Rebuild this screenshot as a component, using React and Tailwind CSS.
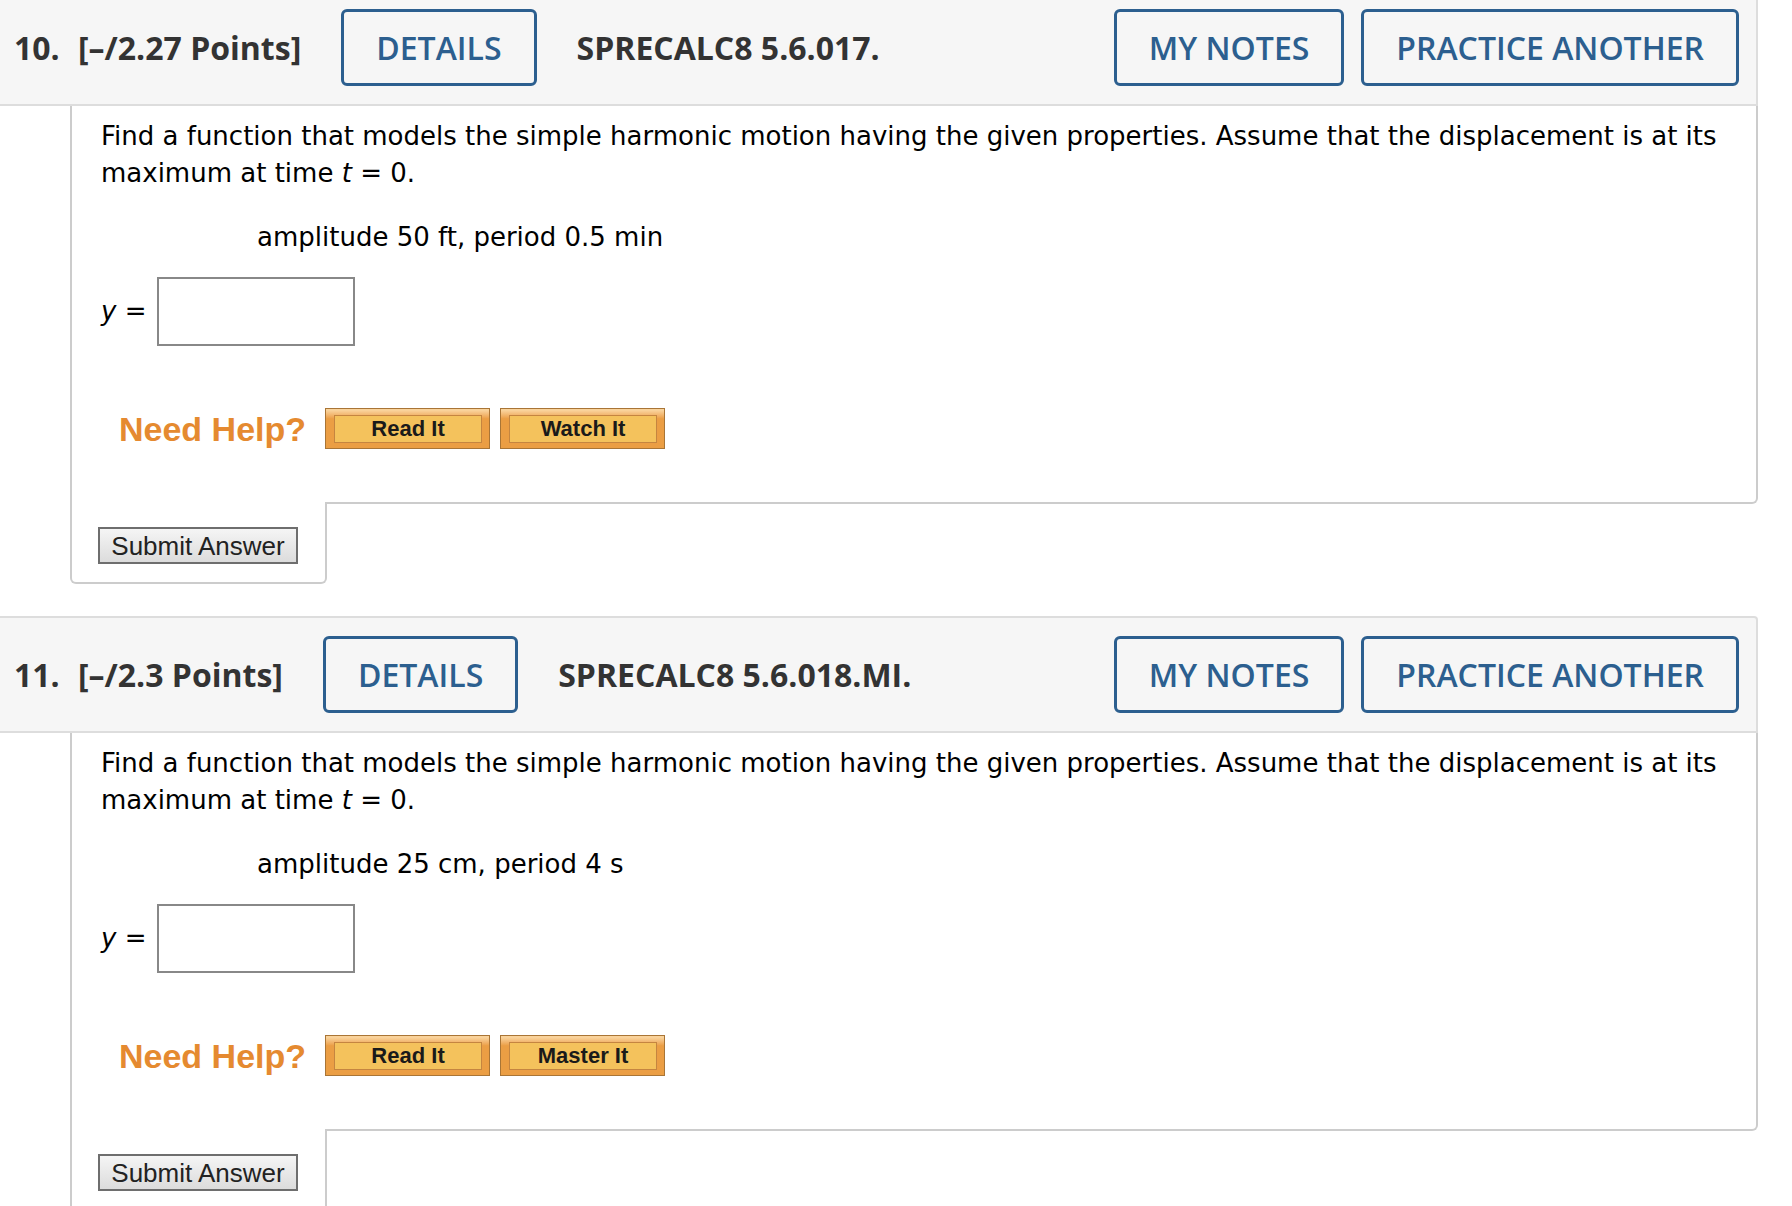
const questions = [
  {
    num: "10.",
    points: "[–/2.27 Points]",
    code: "SPRECALC8 5.6.017.",
    given: "amplitude 50 ft, period 0.5 min",
    help: ["Read It", "Watch It"],
  },
  {
    num: "11.",
    points: "[–/2.3 Points]",
    code: "SPRECALC8 5.6.018.MI.",
    given: "amplitude 25 cm, period 4 s",
    help: ["Read It", "Master It"],
  },
];

const HeaderButton = ({ children, className = "" }) => (
  <button
    className={`h-[77px] px-[32px] border-[3px] border-[#2c5f8f] rounded-[6px] text-[#2c5f8f] text-[32px] font-semibold leading-none ${className}`}
  >
    {children}
  </button>
);

const HelpButton = ({ label }) => (
  <div className="w-[165px] h-[41px] border border-[#a97536] bg-linear-to-b from-[#f9d29a] from-[4%] to-[#eb9e44] to-[25%] pt-[6px] pb-[5px] pl-[8px] pr-[7px]">
    <div className="h-full border border-[#c58540] bg-[#f4c25c] flex items-center justify-center font-['Liberation_Sans',Arial,sans-serif] font-bold text-[22px] text-[#1a1a1a] leading-none">
      {label}
    </div>
  </div>
);

const Question = ({ q, className = "" }) => (
  <div className={className}>
    {/* Header bar */}
    <div className="flex items-center h-[117px] bg-[#f6f6f6] border-y-2 border-r-2 border-[#dddddd] rounded-tr-[4px] pr-[17px] font-['Open_Sans',sans-serif] text-[#333333]">
      <span className="ml-[14px] w-[64px] text-[32px] font-bold">{q.num}</span>
      <span className="text-[32px] font-bold">{q.points}</span>
      <HeaderButton className="ml-[40px]">DETAILS</HeaderButton>
      <span className="ml-[40px] text-[32px] font-bold">{q.code}</span>
      <div className="ml-auto flex gap-[17px]">
        <HeaderButton>MY NOTES</HeaderButton>
        <HeaderButton>PRACTICE ANOTHER</HeaderButton>
      </div>
    </div>

    {/* Body */}
    <div className="ml-[70px]">
      <div className="border-x-2 border-b-2 border-[#cccccc] rounded-br-[6px] pl-[29px] pr-[20px] pt-[12px] pb-[53px] font-['DejaVu_Sans',Verdana,sans-serif] text-[26px] leading-[37px] text-black">
        <p>
          Find a function that models the simple harmonic motion having the given properties. Assume that the
          displacement is at its maximum at time <i>t</i> = 0.
        </p>
        <p className="mt-[27px] ml-[156px]">{q.given}</p>
        <div className="mt-[21px] flex items-center gap-[11px]">
          <span>
            <i>y</i> =
          </span>
          <div className="w-[198px] h-[69px] border-2 border-[#888888] bg-white" />
        </div>
        <div className="mt-[62px] h-[41px] flex items-center">
          <span className="ml-[18px] mr-[19px] font-['Liberation_Sans',Arial,sans-serif] font-bold text-[34px] leading-none text-[#e58a30]">
            Need Help?
          </span>
          <div className="flex gap-[10px]">
            {q.help.map((h) => (
              <HelpButton key={h} label={h} />
            ))}
          </div>
        </div>
      </div>

      {/* Submit tab */}
      <div className="relative -mt-[2px] w-[257px] h-[82px] bg-white border-x-2 border-b-2 border-[#cccccc] rounded-b-[6px] pl-[26px] pt-[25px]">
        <button className="w-[200px] h-[37px] border-2 border-[#6e6e6e] bg-linear-to-b from-[#f5f5f5] to-[#dcdcdc] flex items-center justify-center font-['Liberation_Sans',Arial,sans-serif] text-[26px] leading-none text-[#222222]">
          Submit Answer
        </button>
      </div>
    </div>
  </div>
);

export default function App() {
  return (
    <div className="w-[1792px] h-[1206px] overflow-hidden bg-white">
      <div className="w-[1758px]">
        <Question q={questions[0]} className="-mt-[11px]" />
        <Question q={questions[1]} className="mt-[32px]" />
      </div>
    </div>
  );
}
